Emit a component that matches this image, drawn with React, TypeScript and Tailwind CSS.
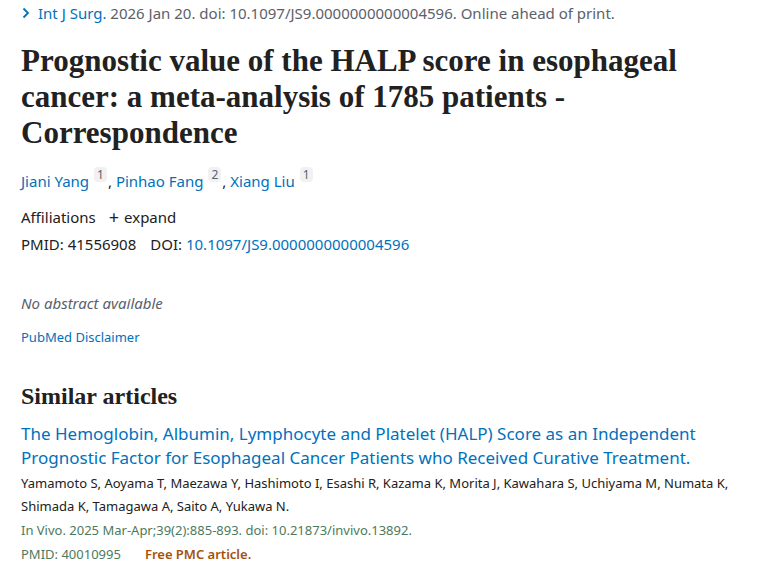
import React from 'react';

const sans = 'font-["Noto_Sans","Open_Sans",sans-serif]';
const serif = 'font-["Liberation_Serif","DejaVu_Serif",serif]';

const Sup: React.FC<{ n: number }> = ({ n }) => (
  <sup className="ml-[5px] mr-[1px] inline-block rounded-sm bg-[#f1f1f1] px-[3px] text-[12px] leading-[15px] text-[#5b616b] align-[2px]">
    {n}
  </sup>
);

const App: React.FC = () => {
  return (
    <div className={`${sans} min-h-[570px] w-[760px] bg-white px-[21px] text-[#212121]`}>
      <div className="flex items-center gap-[7px] pt-[3px] text-[15px] leading-[20px]">
        <svg className="h-[12px] w-[10px] text-[#0071bc]" viewBox="0 0 10 12" fill="none">
          <path d="M2.5 1.5 L7 6 L2.5 10.5" stroke="currentColor" strokeWidth={1.8} />
        </svg>
        <span>
          <span className="text-[#0071bc]">Int J Surg.</span>
          <span className="text-[#5b616b]"> 2026 Jan 20. doi: 10.1097/JS9.0000000000004596. Online ahead of print.</span>
        </span>
      </div>

      <h1 className={`${serif} mt-[20px] text-[31px] font-bold leading-[36px] text-[#212121]`}>
        Prognostic value of the HALP score in esophageal
        <br />
        cancer: a meta-analysis of 1785 patients -
        <br />
        Correspondence
      </h1>

      <div className="mt-[19px] text-[15px] leading-[22px]">
        <a className="text-[#0071bc]">Jiani Yang</a>
        <Sup n={1} />, <a className="text-[#0071bc]">Pinhao Fang</a>
        <Sup n={2} />, <a className="text-[#0071bc]">Xiang Liu</a>
        <Sup n={1} />
      </div>

      <div className="mt-[14px] flex items-center text-[15px] leading-[22px]">
        <span>Affiliations</span>
        <span className="ml-[13px] mr-[5px] text-[18px] leading-none">+</span>
        <span>expand</span>
      </div>

      <div className="mt-[5px] text-[15px] leading-[22px]">
        <span>PMID: 41556908</span>
        <span className="ml-[14px]">DOI: </span>
        <a className="text-[#0071bc]">10.1097/JS9.0000000000004596</a>
      </div>

      <p className="mt-[37px] text-[15px] italic leading-[22px] text-[#5b616b]">No abstract available</p>

      <p className="mt-[13px] text-[13px] leading-[20px] text-[#0071bc]">PubMed Disclaimer</p>

      <h2 className={`${serif} mt-[34px] text-[24px] font-bold leading-[30px]`}>Similar articles</h2>

      <div className="mt-[11px]">
        <a className="block text-[17px] leading-[24px] text-[#0071bc]">
          The Hemoglobin, Albumin, Lymphocyte and Platelet (HALP) Score as an Independent
          <br />
          Prognostic Factor for Esophageal Cancer Patients who Received Curative Treatment.
        </a>
        <p className="mt-[2px] text-[13px] leading-[23px]">
          Yamamoto S, Aoyama T, Maezawa Y, Hashimoto I, Esashi R, Kazama K, Morita J, Kawahara S, Uchiyama M, Numata K,
          <br />
          Shimada K, Tamagawa A, Saito A, Yukawa N.
        </p>
        <p className="text-[13px] leading-[24px] text-[#4d7a5c]">In Vivo. 2025 Mar-Apr;39(2):885-893. doi: 10.21873/invivo.13892.</p>
        <p className="text-[13px] leading-[24px]">
          <span className="text-[#4d7a5c]">PMID: 40010995</span>
          <span className="ml-[24px] font-semibold text-[#a5520f]">Free PMC article.</span>
        </p>
      </div>
    </div>
  );
};

export default App;
